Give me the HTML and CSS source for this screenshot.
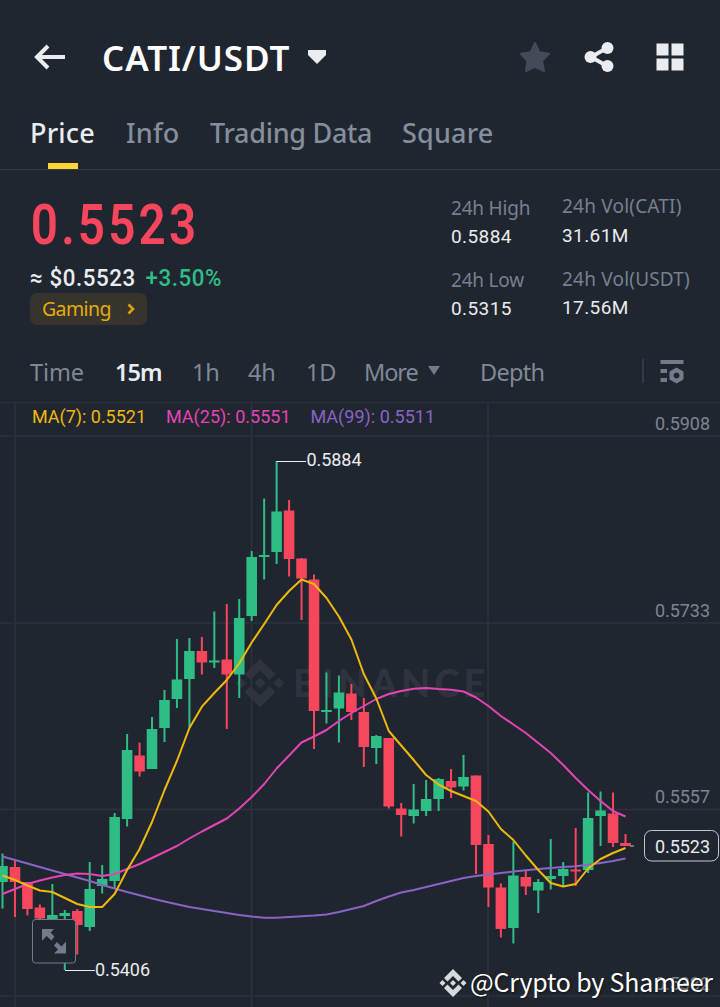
FILE: index.html
```html
<!DOCTYPE html>
<html lang="en">
<head>
    <meta charset="UTF-8">
    <meta name="viewport" content="width=device-width, initial-scale=1.0">
    <title>CATI/USDT</title>
    <link rel="stylesheet" href="styles.css">
</head>
<body>
    <!-- Header -->
    <header class="header">
        <svg class="back" width="32" height="26" viewBox="0 0 32 26">
            <path d="M14 2 L3 13 L14 24 M3 13 H31" fill="none" stroke="#eaecef" stroke-width="4"/>
        </svg>
        <h1 class="pair">CATI/USDT</h1>
        <svg class="pair-arrow" width="20" height="14" viewBox="0 0 20 14">
            <path d="M1 0 H19 V5 L10 14 L1 5 Z" fill="#eaecef"/>
        </svg>
        <div class="actions">
            <svg width="32" height="32" viewBox="0 0 32 32">
                <path d="M16 2 L20.4 11.3 L30 12.8 L23.1 19.8 L25 30 L16 25.8 L7 30 L8.4 19.8 L2 12.8 L11.6 11.3 Z" fill="#434b5a" stroke="#434b5a" stroke-width="2" stroke-linejoin="round"/>
            </svg>
            <svg width="30" height="32" viewBox="0 0 30 32">
                <path d="M24 6.500 L7 16 L24 25.500" fill="none" stroke="#eaecef" stroke-width="4"/>
                <circle cx="23.500" cy="7" r="6" fill="#eaecef"/>
                <circle cx="6.500" cy="16" r="6" fill="#eaecef"/>
                <circle cx="23.500" cy="25" r="6" fill="#eaecef"/>
            </svg>
            <svg width="28" height="28" viewBox="0 0 28 28">
                <path d="M.5 .5 h12 v12 h-12 z M15.500 .5 h12 v12 h-12 z M.5 15.500 h12 v12 h-12 z M15.500 15.500 h12 v12 h-12 z" fill="#eaecef"/>
            </svg>
        </div>
    </header>

    <!-- Tabs -->
    <nav class="tabs">
        <a class="tab active">Price</a>
        <a class="tab">Info</a>
        <a class="tab trading">Trading Data</a>
        <a class="tab">Square</a>
    </nav>

    <!-- Price and 24h stats -->
    <section class="summary">
        <div class="price-box">
            <div class="price">0.5523</div>
            <div class="fiat"><span class="approx">≈</span> <span class="usd">$0.5523</span> <span class="change">+3.50%</span></div>
            <div class="tag">Gaming
                <svg width="8" height="12" viewBox="0 0 8 12"><path d="M1.500 1.500 L6 6 L1.500 10.500" fill="none" stroke="#d9a40b" stroke-width="2.600"/></svg>
            </div>
        </div>
        <div class="stats">
            <div class="stat"><p class="label">24h High</p><p class="value">0.5884</p></div>
            <div class="stat"><p class="label">24h Low</p><p class="value">0.5315</p></div>
        </div>
        <div class="stats volume">
            <div class="stat"><p class="label">24h Vol(CATI)</p><p class="value">31.61M</p></div>
            <div class="stat"><p class="label">24h Vol(USDT)</p><p class="value">17.56M</p></div>
        </div>
    </section>

    <!-- Chart intervals -->
    <nav class="periods">
        <span>Time</span>
        <span class="selected">15m</span>
        <span>1h</span>
        <span>4h</span>
        <span>1D</span>
        <span class="more">More<i class="caret"></i></span>
        <span class="depth">Depth</span>
        <svg class="settings" width="44" height="26" viewBox="0 0 44 26">
            <path d="M1 0 V24" stroke="#333b47" stroke-width="2"/>
            <path d="M18.500 3 H41.500 M18.500 12 H25 M18.500 21 H25" stroke="#737b8d" stroke-width="4"/>
            <path d="M34.500 8.500 L41.500 12.500 V20.500 L34.500 24.500 L27.500 20.500 V12.500 Z M34.500 13.500 a3 3 0 1 0 .01 0 Z" fill="#737b8d" fill-rule="evenodd"/>
        </svg>
    </nav>

    <!-- Chart -->
    <svg class="chart" width="720" height="605" viewBox="0 402 720 605">
        <g class="grid">
            <path d="M0 402.500 H720 M0 436 H720 M0 623 H720 M0 809.500 H720 M0 996 H720"/>
            <path d="M15 402 V1007 M251.500 402 V1007 M488 402 V1007"/>
        </g>
        <g class="brand">
            <path d="M260 658.500 L275.500 674 L269.500 680 L260 670.500 L250.500 680 L244.500 674 Z"/>
            <path d="M260 707.500 L275.500 692 L269.500 686 L260 695.500 L250.500 686 L244.500 692 Z"/>
            <path d="M260 677.500 L265.500 683 L260 688.500 L254.500 683 Z M241 677.500 L246.500 683 L241 688.500 L235.500 683 Z M279 677.500 L284.500 683 L279 688.500 L273.500 683 Z"/>
            <text x="293" y="697" textLength="192">BINANCE</text>
        </g>
        <g id="candles"></g>
        <polyline id="ma99" class="line purple"/>
        <polyline id="ma25" class="line pink"/>
        <polyline id="ma7" class="line yellow"/>

        <text class="ma t-yellow" x="32" y="423" textLength="114">MA(7): 0.5521</text>
        <text class="ma t-pink" x="166" y="423" textLength="124.500">MA(25): 0.5551</text>
        <text class="ma t-purple" x="310.500" y="423" textLength="124.500">MA(99): 0.5511</text>

        <path class="marker" d="M276.500 461.500 H306 M65 970.500 H95"/>
        <text class="mark" x="306.500" y="466" textLength="55">0.5884</text>
        <text class="mark" x="95" y="976" textLength="55">0.5406</text>

        <text class="axis" x="655" y="430" textLength="55">0.5908</text>
        <text class="axis" x="655" y="617" textLength="55">0.5733</text>
        <text class="axis" x="655" y="803" textLength="55">0.5557</text>
        <text class="axis" x="655" y="990" textLength="55">0.5382</text>

        <path d="M630 846 H634" stroke="#848e9c" stroke-width="1.500"/>
        <rect class="now-box" x="644.500" y="830.500" width="74" height="30.500" rx="7"/>
        <text class="mark" x="655" y="853" textLength="55">0.5523</text>

        <!-- Fullscreen button -->
        <rect class="expand" x="32.500" y="919.500" width="43" height="43.500" rx="3"/>
        <path fill="#737b8d" d="M42 929 H54 L50.500 932.500 L54.500 936.500 L51.500 940.500 L46.500 936 L42 941 Z M66 953.500 H54 L58 949.500 L54 945.500 L57 942 L61.500 946.500 L66 941.500 Z"/>

        <!-- Author signature -->
        <g class="sign">
            <path d="M453 969 L462 978 L458.500 981.500 L453 976 L447.500 981.500 L444 978 Z M453 997 L462 988 L458.500 984.500 L453 990 L447.500 984.500 L444 988 Z M453 980 L456 983 L453 986 L450 983 Z M442.500 980 L445.500 983 L442.500 986 L439.500 983 Z M463.500 980 L466.500 983 L463.500 986 L460.500 983 Z"/>
            <text x="470" y="992" textLength="243">@Crypto by Shameer</text>
        </g>
    </svg>

    <script src="script.js"></script>
</body>
</html>
```
FILE: styles.css
```css
* {
    box-sizing: border-box;
}
body {
    margin: 0;
    width: 720px;
    height: 1007px;
    overflow: hidden;
    background-color: #202630;
    color: #eaecef;
    font-family: "Noto Sans", sans-serif;
}
p, h1 {
    margin: 0;
}
svg {
    display: block;
    flex: none;
}

/* Header */
.header {
    display: flex;
    align-items: center;
    height: 114px;
    padding: 0 36px 0 34px;
}
.pair {
    width: 204px;
    margin-left: 36px;
    font-size: 35px;
    font-weight: 650;
    line-height: 48px;
    letter-spacing: 0.9px;
    padding-top: 2px;
    color: #fff;
    white-space: nowrap;
}
.pair-arrow {
    margin-left: 1px;
}
.actions {
    display: flex;
    align-items: center;
    margin-left: auto;
}
.actions svg + svg {
    margin-left: 33px;
}
.actions svg:last-child {
    margin-left: 42px;
}

/* Tabs */
.tabs {
    display: grid;
    grid-template-columns: 96px 84px 192px auto;
    height: 56px;
    padding-left: 30px;
    border-bottom: 1px solid #333b47;
}
.tab {
    position: relative;
    font-size: 27px;
    font-weight: 500;
    line-height: 38px;
    letter-spacing: 0.2px;
    color: #848e9c;
}
.tab.active {
    color: #eaecef;
}
.tab.trading {
    letter-spacing: -0.3px;
}
.tab.active::after {
    content: "";
    position: absolute;
    left: 18px;
    bottom: 0;
    width: 30px;
    height: 6px;
    background-color: #fcd535;
}

/* Summary */
.summary {
    display: grid;
    grid-template-columns: 421px 111px auto;
    height: 172px;
    padding-left: 30px;
}
.price {
    height: 88px;
    padding: 22px 0 0 1px;
    font-family: Roboto, sans-serif;
    font-size: 56px;
    font-weight: 650;
    line-height: 66px;
    letter-spacing: 3.7px;
    color: #f6465d;
    transform: scaleX(0.85);
    transform-origin: left;
}
.fiat {
    height: 35px;
    font-family: Roboto, sans-serif;
    font-size: 24px;
    font-weight: 550;
    line-height: 40px;
    letter-spacing: 0.6px;
    white-space: nowrap;
    transform: scaleX(0.93);
    transform-origin: left;
}
.change {
    margin-left: 4px;
    color: #2ebd85;
}
.tag {
    display: flex;
    align-items: center;
    justify-content: space-between;
    width: 117px;
    height: 32px;
    padding: 0 12px 1px;
    border-radius: 7px;
    background-color: #37342d;
    color: #e3ac0c;
    font-size: 19.5px;
    letter-spacing: -0.6px;
}
.stats {
    padding-top: 24px;
}
.volume {
    padding-top: 22px;
}
.stat {
    height: 72px;
    white-space: nowrap;
}
.label {
    font-size: 19px;
    line-height: 28px;
    letter-spacing: -0.2px;
    color: #76808f;
}
.volume .label {
    letter-spacing: 0.2px;
}
.volume .stat + .stat {
    padding-top: 1px;
}
.value {
    font-family: Roboto, sans-serif;
    font-size: 19px;
    font-weight: 450;
    line-height: 29px;
    letter-spacing: 0.4px;
}
.volume .value {
    padding-top: 1px;
}
.volume .stat + .stat .value {
    padding-top: 0;
}

/* Intervals */
.periods {
    display: grid;
    grid-template-columns: 85px 77px 56px 58px 58px 116px 162px auto;
    height: 60px;
    padding-left: 30px;
    font-size: 23.5px;
    line-height: 61px;
    letter-spacing: -0.1px;
    color: #7f8897;
}
.selected {
    font-weight: 650;
    letter-spacing: -1px;
    color: #eaecef;
}
.more {
    display: flex;
    align-items: center;
    letter-spacing: -1.1px;
}
.depth {
    letter-spacing: -0.7px;
}
.caret {
    width: 0;
    margin: -4px 0 0 10px;
    border: 6.5px solid transparent;
    border-top: 9px solid #737b8d;
    border-bottom: 0;
}
.settings {
    margin-top: 17px;
}

/* Chart */
.chart {
    font-family: Roboto, sans-serif;
    font-size: 18px;
}
.grid path {
    stroke: #2d333e;
    stroke-width: 1.5;
}
.brand {
    fill: #2f333d;
    font-family: Lato, sans-serif;
    font-size: 37.5px;
    font-weight: 900;
}
.up {
    fill: #2ebd85;
}
.down {
    fill: #f6465d;
}
.line {
    fill: none;
    stroke-width: 2;
    stroke-linejoin: round;
}
.yellow {
    stroke: #f0b90b;
}
.pink {
    stroke: #e444b4;
}
.purple {
    stroke: #8a63c7;
}
.t-yellow {
    fill: #f0b90b;
}
.t-pink {
    fill: #e444b4;
}
.t-purple {
    fill: #8a63c7;
}
.marker {
    stroke: #eaecef;
}
.mark {
    fill: #eaecef;
}
.axis {
    fill: #7d8593;
}
.now-box {
    fill: #202630;
    stroke: #c4c7cd;
}
.expand {
    fill: #202630;
    stroke: #737b8d;
}
.sign {
    fill: #d8d9db;
}
.sign text {
    fill: #fff;
    font-family: "Noto Sans CJK SC", sans-serif;
    font-size: 25px;
    text-shadow: 1px 1px 2px #111;
}
```
FILE: script.js
```js
const STEP = 12.46;
const START = 2.5;

// [up, high, body top, body bottom, low]
const candles = [
    [1, 853.5, 866, 882, 908.5], [0, 861, 867, 882, 917], [0, 882, 882, 909, 915.5],
    [0, 904.5, 907.5, 918.5, 920], [1, 884, 915, 919, 925], [1, 910, 913, 916, 970],
    [0, 909, 911, 925, 954.5], [1, 862, 889, 927, 931], [1, 865, 879, 886, 893.5],
    [1, 813, 817, 881, 888], [1, 734, 750, 819, 826.5], [0, 742.5, 755.5, 771.5, 776.5],
    [1, 717, 729, 769, 769], [1, 690, 700, 728, 742], [1, 639, 679.5, 699, 708],
    [1, 638, 651, 679, 727], [0, 637, 651, 662.5, 674.5], [1, 611.5, 660.5, 662.5, 668],
    [0, 604, 659.5, 674.5, 729], [1, 599, 618, 674.5, 698], [1, 551, 557, 616, 621],
    [1, 498.5, 555, 557, 579.5], [1, 461, 511.5, 552, 564], [0, 500, 510.5, 559, 576.5],
    [0, 558, 558.5, 578.5, 620], [0, 574.5, 579.5, 711, 749], [1, 672.5, 710, 712, 723.5],
    [1, 675.5, 692.5, 708.5, 742.5], [0, 684, 693.5, 712, 720], [0, 698, 712, 747, 767],
    [1, 735, 736, 748, 764], [0, 738, 738, 806.5, 808.5], [0, 803, 808.5, 815, 836.5],
    [1, 784, 809.5, 816, 823.5], [1, 780, 799, 811, 816], [1, 778, 779, 799, 811],
    [0, 769, 781, 787.5, 798], [1, 755, 777, 786.5, 790.5], [0, 775.5, 775.5, 845, 874],
    [0, 835, 844, 887.5, 907], [0, 883.5, 887.5, 929, 937.5], [1, 841.5, 875.5, 928, 943.5],
    [0, 871, 877, 886.5, 895], [1, 879, 882, 890.5, 913], [1, 839, 876, 879, 889.5],
    [1, 862, 869, 876, 886], [0, 828, 869.5, 871.5, 886], [1, 792.5, 818, 870, 873],
    [1, 791.5, 810.5, 816, 846], [0, 792.5, 813.5, 843, 847], [0, 834, 843, 846, 846]
];

const ma7 = [875.5, 880, 885.5, 890.5, 892, 898, 904, 907, 907, 894, 870, 849, 822, 790, 761,
    728, 706.7, 693, 680, 663.5, 642.5, 624, 605, 591, 579.5, 584, 598, 616.5, 639.5, 674,
    698.5, 731, 745.5, 760, 775, 784.5, 791, 796, 801, 811.5, 829, 840, 855.5, 870, 883,
    886.5, 884, 868.5, 859, 853, 848];

const ma25 = [894, 889, 884, 880.5, 877.5, 875, 873.5, 874, 876, 874, 869, 864, 858, 852, 846,
    838.5, 831.5, 825, 818.5, 808.5, 797, 784, 768.5, 755.5, 742.5, 736.5, 730, 721, 713, 706,
    699, 694, 691, 688.7, 688, 689, 689.7, 691.5, 697.5, 706, 716, 724.5, 733, 743, 753,
    765, 778, 790, 801, 811, 816.5];

const ma99 = [856.5, 860, 863.5, 867, 870.5, 874, 877.5, 881, 885, 888.5, 892, 895.3, 898.5, 901.5, 904.3,
    907, 909, 911, 913, 915, 916.6, 917.7, 917.7, 917, 916.3, 915.6, 914.5, 912, 909, 906,
    901, 896.5, 892.5, 890, 887, 884, 881, 878, 876, 874.5, 873, 871.5, 870.2, 869, 868,
    867, 866.2, 864.8, 863, 861, 858.5];

function rect(x, y, w, h, cls) {
    return `<rect class="${cls}" x="${x}" y="${y}" width="${w}" height="${h}"/>`;
}

// Candles
let html = '';
candles.forEach(([up, high, top, bottom, low], i) => {
    const x = START + i * STEP;
    const cls = up ? 'up' : 'down';
    html += rect(x - 1, high, 2, low - high, cls);
    html += rect(x - 5.3, top, 10.6, bottom - top, cls);
});
document.getElementById('candles').innerHTML = html;

// Moving averages
function drawLine(id, values) {
    const points = values.map((y, i) => (START + i * STEP).toFixed(1) + ',' + y);
    document.getElementById(id).setAttribute('points', points.join(' '));
}
drawLine('ma7', ma7);
drawLine('ma25', ma25);
drawLine('ma99', ma99);
```
